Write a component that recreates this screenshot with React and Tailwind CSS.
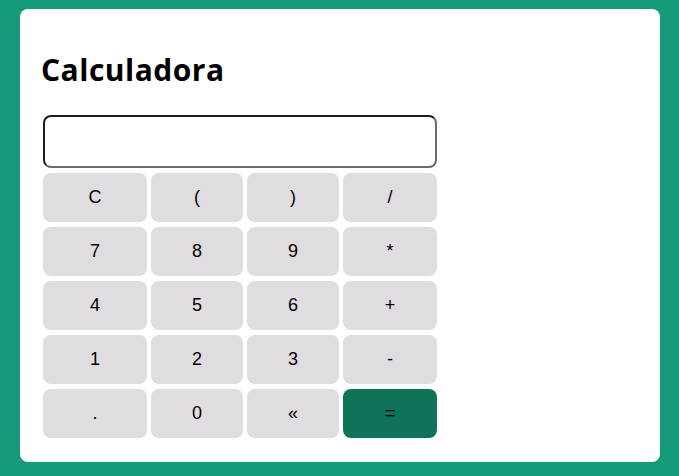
const keys = [
  'C', '(', ')', '/',
  '7', '8', '9', '*',
  '4', '5', '6', '+',
  '1', '2', '3', '-',
  '.', '0', '«', '=',
];

export default function App() {
  return (
    <div className="min-h-[476px] bg-[#159b7a] pt-[9px] pl-[20px] pr-[19px] pb-[14px]">
      <div className="bg-white rounded-[8px] h-[453px] pl-[21px] pt-[42px]">
        <h2 className="text-[30px] font-bold tracking-[0.5px] text-black leading-[38px] [font-family:'Open_Sans',sans-serif]">
          Calculadora
        </h2>

        <div className="ml-[2px] mt-[26px] w-[394px]">
          <input
            type="text"
            className="block w-full h-[53px] rounded-[8px] border-2 border-t-[#1f1f1f] border-l-[#1f1f1f] border-r-[#6b6b6b] border-b-[#6b6b6b] bg-white px-2 text-lg outline-none"
          />

          <div className="mt-[5px] grid grid-cols-[104px_92px_92px_94px] gap-x-[4px] gap-y-[5px] [font-family:'Liberation_Sans',Arial,sans-serif]">
            {keys.map((k) => (
              <button
                key={k}
                className={
                  k === '='
                    ? 'h-[49px] rounded-[8px] bg-[#0e7358] text-black text-[18px]'
                    : 'h-[49px] rounded-[8px] bg-[#dfdddf] text-black text-[18px]'
                }
              >
                {k}
              </button>
            ))}
          </div>
        </div>
      </div>
    </div>
  );
}
